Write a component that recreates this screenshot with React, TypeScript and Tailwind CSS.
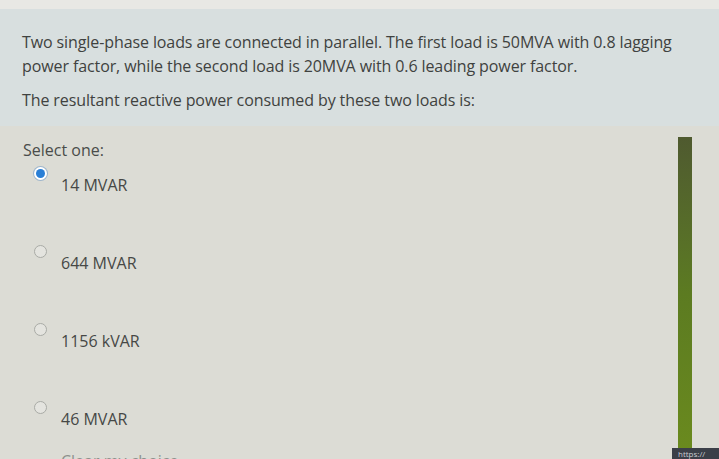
const options = [
  { label: "14 MVAR", checked: true },
  { label: "644 MVAR", checked: false },
  { label: "1156 kVAR", checked: false },
  { label: "46 MVAR", checked: false },
];

function Radio({ checked }: { checked: boolean }) {
  return checked ? (
    <span className="flex h-[13px] w-[13px] flex-none items-center justify-center rounded-full bg-white shadow-[0_0_0_1px_#9fb6cc]">
      <span className="h-[9px] w-[9px] rounded-full bg-[#2a7fd6]" />
    </span>
  ) : (
    <span className="block h-[13px] w-[13px] flex-none rounded-full border border-[#a9aba6] bg-[#e4e4df]" />
  );
}

export default function App() {
  return (
    <div
      className="relative h-[459px] w-[719px] overflow-hidden bg-[#dcdcd5] text-[#3f4240]"
      style={{ fontFamily: '"Open Sans", "Noto Sans", sans-serif' }}
    >
      <div className="h-[9px] bg-[#e8e8e4]" />
      <div className="h-[117px] bg-[#d8dfdf] pl-[22px] pr-1 pt-[21px] text-[16px] tracking-[-0.1px]">
        <p className="leading-[24px]">
          Two single-phase loads are connected in parallel. The first load is 50MVA with 0.8 lagging
          power factor, while the second load is 20MVA with 0.6 leading power factor.
        </p>
        <p className="mt-[10px] leading-[24px]">The resultant reactive power consumed by these two loads is:</p>
      </div>

      <div className="flex">
        <div className="flex-1 pl-[23px] pt-[12px]">
          <div className="text-[16px] leading-[24px] text-[#4a4c4a]">Select one:</div>
          <div className="flex flex-col">
            {options.map((o, i) => (
              <div key={i} className="flex h-[78px] items-start gap-[14px] pl-[11px] pt-[4px]">
                <div className="pt-[1px]">
                  <Radio checked={o.checked} />
                </div>
                <span className="pt-[9px] text-[16px] leading-[20px] text-[#464846]">{o.label}</span>
              </div>
            ))}
            <div className="-mt-[23px] pl-[38px] text-[16px] leading-[20px] text-[#8e918d]">Clear my choice</div>
          </div>
        </div>
        <div className="flex w-[41px] flex-none flex-col">
          <div className="mt-[11px] h-[313px] w-[14px] bg-gradient-to-b from-[#4f5a2f] via-[#5c7b21] to-[#6a8a1e]" />
        </div>
      </div>

      <div className="absolute bottom-0 right-0 h-[11px] w-[47px] bg-[#3b3f48] pl-[6px] text-[8px] leading-[11px] text-[#c9ccd2]">
        https://
      </div>
    </div>
  );
}
